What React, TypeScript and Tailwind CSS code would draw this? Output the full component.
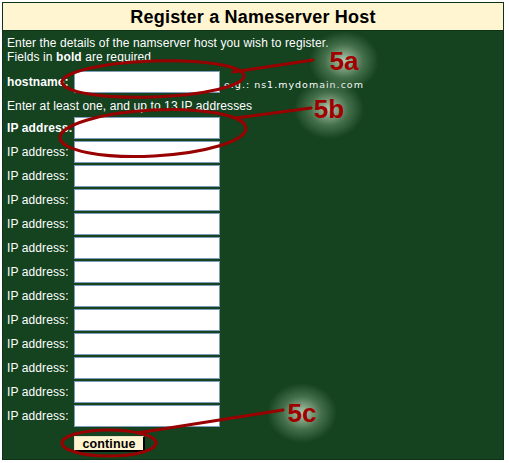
import * as React from "react";

const IP_ROWS = 13;

function TextInput() {
  return (
    <input
      type="text"
      className="h-[22px] w-[146px] shrink-0 border border-[#7f9db9] bg-white px-1 text-[12px] outline-none"
    />
  );
}

function FieldRow({
  label,
  bold,
  hint,
}: {
  label: string;
  bold?: boolean;
  hint?: string;
}) {
  return (
    <div className="flex h-[22px] items-center">
      <span className={bold ? "w-[67px] shrink-0 font-bold" : "w-[67px] shrink-0"}>
        {label}
      </span>
      <TextInput />
      {hint && (
        <span className="ml-[4px] mt-[5px] font-['DejaVu_Sans',sans-serif] text-[9.5px] tracking-[1px]">
          {hint}
        </span>
      )}
    </div>
  );
}

function Callout({ label, className }: { label: string; className: string }) {
  return (
    <div
      className={
        "pointer-events-none absolute flex h-[60px] w-[70px] items-center justify-center rounded-full bg-[radial-gradient(closest-side,rgba(215,235,210,0.8),rgba(140,180,140,0.4)_55%,rgba(21,66,31,0)_100%)] " +
        className
      }
    >
      <span className="font-['Liberation_Sans',Arial,sans-serif] text-[26px] font-bold leading-none text-[#a00000]">
        {label}
      </span>
    </div>
  );
}

export default function App() {
  return (
    <div className="relative h-[463px] w-[509px] bg-white font-['Liberation_Sans',Arial,sans-serif] text-[12px] tracking-[0.1px] text-white">
      <div className="absolute left-[2px] top-[2px] flex h-[458px] w-[502px] flex-col border border-[#0f3318] bg-[#15421f]">
        <div className="flex h-[28px] shrink-0 items-center justify-center border-b border-[#0f3318] bg-[#fff5d0]">
          <h1 className="pt-[1px] text-[18px] font-bold tracking-[0.2px] text-black">
            Register a Nameserver Host
          </h1>
        </div>

        <div className="flex flex-col pl-[4px] pt-[5px] leading-[14px]">
          <p>Enter the details of the namserver host you wish to register.</p>
          <p>
            Fields in <b>bold</b> are required
          </p>

          <div className="mt-[7px]">
            <FieldRow label="hostname:" bold hint="e.g.: ns1.mydomain.com" />
          </div>

          <p className="mt-[6px]">Enter at least one, and up to 13 IP addresses</p>

          <div className="mt-[4px] flex flex-col gap-[2px]">
            {Array.from({ length: IP_ROWS }).map((_, i) => (
              <FieldRow key={i} label="IP address:" bold={i === 0} />
            ))}
          </div>

          <div className="mt-[9px] pl-[67px]">
            <button
              type="button"
              className="h-[16px] w-[71px] border-b-2 border-l border-r-2 border-t border-b-black border-l-[#e8e0c0] border-r-black border-t-[#e8e0c0] bg-[#fff5d0] text-[12.5px] font-bold leading-[12px] text-black"
            >
              continue
            </button>
          </div>
        </div>
      </div>

      {/* annotation overlay */}
      <Callout label="5a" className="left-[309px] top-[31px]" />
      <Callout label="5b" className="left-[294px] top-[79px]" />
      <Callout label="5c" className="left-[267px] top-[383px]" />

      <svg
        className="pointer-events-none absolute inset-0"
        width={509}
        height={463}
        viewBox="0 0 509 463"
        fill="none"
        stroke="#990000"
        strokeWidth={3}
      >
        <ellipse cx={153} cy={79} rx={91} ry={18} transform="rotate(-2 153 79)" />
        <line x1={233} y1={72} x2={313} y2={60} strokeLinecap="round" />
        <ellipse cx={153} cy={133} rx={93} ry={23} transform="rotate(-3 153 133)" />
        <line x1={236} y1={118} x2={311} y2={108} strokeLinecap="round" />
        <ellipse cx={109} cy={443} rx={47} ry={13} />
        <line x1={137} y1={433} x2={283} y2={410} strokeLinecap="round" />
      </svg>
    </div>
  );
}
